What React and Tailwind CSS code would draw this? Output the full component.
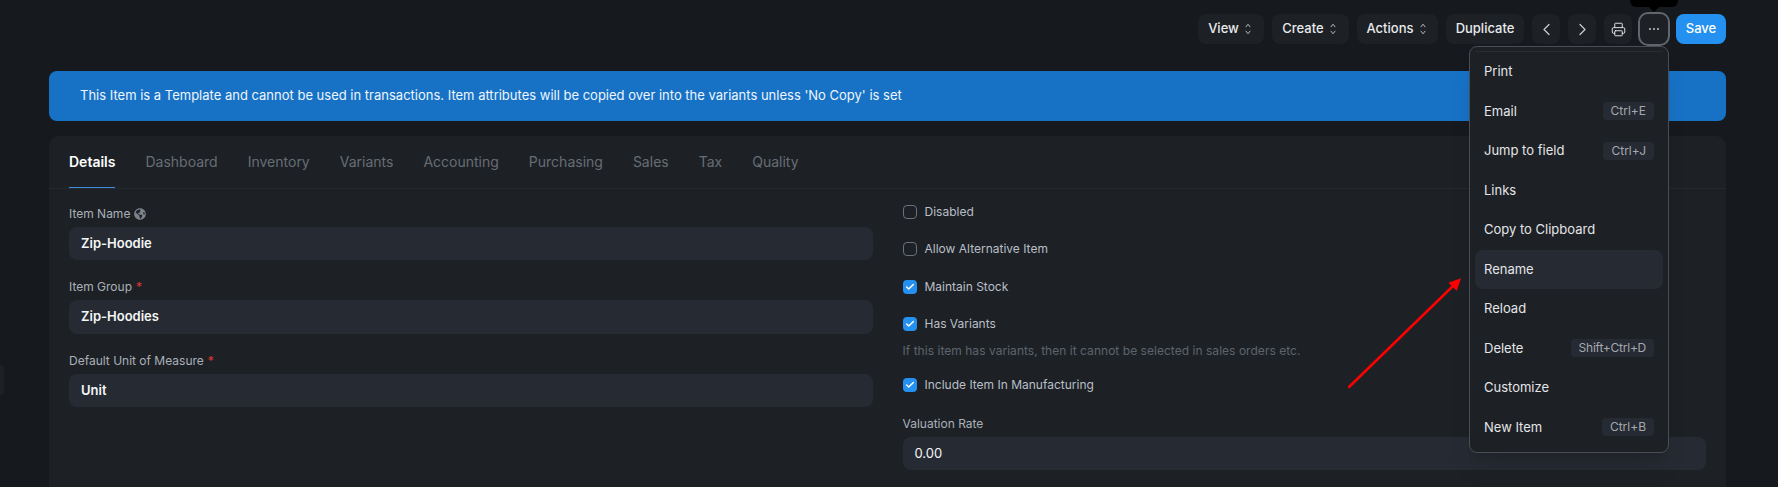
import React from 'react';
import { Check, Printer } from 'lucide-react';
import { FaGlobeAmericas } from 'react-icons/fa';

const menuItems = [
  { label: 'Print' },
  { label: 'Email', keys: 'Ctrl+E' },
  { label: 'Jump to field', keys: 'Ctrl+J' },
  { label: 'Links' },
  { label: 'Copy to Clipboard' },
  { label: 'Rename', active: true },
  { label: 'Reload' },
  { label: 'Delete', keys: 'Shift+Ctrl+D', tight: true },
  { label: 'Customize' },
  { label: 'New Item', keys: 'Ctrl+B' }
];

const tabs = ['Dashboard', 'Inventory', 'Variants', 'Accounting', 'Purchasing', 'Sales', 'Tax', 'Quality'];

function UpDown() {
  return (
    <svg width="8" height="12" viewBox="0 0 8 12" fill="none" stroke="#b4b8be" strokeWidth="1" strokeLinecap="round" strokeLinejoin="round">
      <path d="M2 3.8 4 1.2 6 3.8" />
      <path d="M2 8.2 4 10.8 6 8.2" />
    </svg>
  );
}

function Chevron({ d }) {
  return (
    <svg width="9" height="13" viewBox="0 0 9 13" fill="none" stroke="#c4c8cd" strokeWidth="1.3" strokeLinecap="round" strokeLinejoin="round">
      <path d={d} />
    </svg>
  );
}

function ToolButton({ children, className = '' }) {
  return (
    <button className={`flex h-[30px] items-center justify-center rounded-lg bg-[#1d2125] text-[13px] font-[450] text-[#e8eaed] ${className}`}>
      {children}
    </button>
  );
}

function Field({ label, required, globe, value, height = 'h-[33px]', className = '' }) {
  return (
    <div className={className}>
      <div className="flex h-[19px] items-center gap-1 text-xs text-[#a9b0b8]">
        {label}
        {required && <span className="text-[#e03636]">*</span>}
        {globe && <FaGlobeAmericas size={12} className="text-[#7c8289]" />}
      </div>
      <div className={`mt-[4px] flex items-center rounded-lg bg-[#262a32] px-3 text-[13px] font-semibold text-[#f5f6f7] ${height}`}>
        {value}
      </div>
    </div>
  );
}

function CheckRow({ label, checked, className = '' }) {
  return (
    <div className={`flex h-[16px] items-center gap-2 text-xs text-[#b9bfc7] ${className}`}>
      {checked ? (
        <span className="flex size-[14px] items-center justify-center rounded-[4px] bg-[#2490ef]">
          <Check size={10} strokeWidth={3.5} className="text-white" />
        </span>
      ) : (
        <span className="size-[14px] rounded-[4px] border border-[#6b7178]" />
      )}
      {label}
    </div>
  );
}

export default function App() {
  return (
    <div className="relative h-[487px] overflow-hidden bg-[#16191e] font-['Inter',sans-serif]">
      {/* sidebar leftover on the left edge */}
      <div className="absolute left-0 top-[365px] h-[30px] w-[4px] rounded-r-md bg-[#1d2125]" />

      <div className="flex justify-end gap-2 pl-[49px] pr-[52px] pt-[14px]">
        <ToolButton className="w-[66px] gap-[5px] pr-[2px]">View <UpDown /></ToolButton>
        <ToolButton className="w-[77px] gap-[5px] pr-[2px]">Create <UpDown /></ToolButton>
        <ToolButton className="w-[81px] gap-[5px] pr-[2px]">Actions <UpDown /></ToolButton>
        <ToolButton className="w-[78px]">Duplicate</ToolButton>
        <ToolButton className="w-[28px]"><Chevron d="M7 1.5 2 6.5 7 11.5" /></ToolButton>
        <ToolButton className="w-[28px]"><Chevron d="M2 1.5 7 6.5 2 11.5" /></ToolButton>
        <ToolButton className="w-[28px]"><Printer size={15} strokeWidth={1.5} /></ToolButton>
        <ToolButton className="w-[28px] outline-2 outline-[#62666c]">
          <svg width="12" height="4" viewBox="0 0 12 4" fill="#d4d7db">
            <circle cx="2" cy="2" r="0.9" />
            <circle cx="6" cy="2" r="0.9" />
            <circle cx="10" cy="2" r="0.9" />
          </svg>
        </ToolButton>
        <ToolButton className="w-[50px] bg-[#2490ef] text-white">Save</ToolButton>
      </div>

      <div className="mt-[27px] pl-[49px] pr-[52px]">
        <div className="flex h-[50px] items-center rounded-lg bg-[#1772c6] pl-[31px] text-[13px] text-[#eef5fc]">
          This Item is a Template and cannot be used in transactions. Item attributes will be copied over into the variants unless 'No Copy' is set
        </div>

        <div className="mt-[15px] rounded-t-[10px] bg-[#1d2125] pb-[40px]">
          <div className="flex h-[53px] gap-[30px] border-b border-[#25292e] px-5 text-sm text-[#676d75]">
            <div className="flex h-[52px] items-center border-b border-[#3b8fdc] font-semibold text-white">Details</div>
            {tabs.map(tab => (
              <div key={tab} className="flex h-[52px] items-center">{tab}</div>
            ))}
          </div>

          <div className="grid grid-cols-2 gap-[30px] px-5 pt-[15px]">
            <div>
              <Field label="Item Name" globe value="Zip-Hoodie" />
              <Field label="Item Group" required value="Zip-Hoodies" height="h-[34px]" className="mt-[17px]" />
              <Field label="Default Unit of Measure" required value="Unit" className="mt-[17px]" />
            </div>
            <div>
              <CheckRow label="Disabled" />
              <CheckRow label="Allow Alternative Item" className="mt-[21px]" />
              <CheckRow label="Maintain Stock" checked className="mt-[22px]" />
              <CheckRow label="Has Variants" checked className="mt-[21px]" />
              <p className="mt-[11px] h-[16px] text-xs leading-4 tracking-[0.003em] text-[#5d646c]">
                If this item has variants, then it cannot be selected in sales orders etc.
              </p>
              <CheckRow label="Include Item In Manufacturing" checked className="mt-[18px]" />
              <Field label="Valuation Rate" value="0.00" className="mt-[21px] [&>div:last-child]:font-normal" />
            </div>
          </div>
        </div>
      </div>

      {/* tooltip of the focused button */}
      <div className="absolute left-[1630px] top-0 h-[7px] w-[48px] rounded-b-md bg-black" />
      <div className="absolute left-[1649px] top-[7px] size-0 border-x-[5px] border-t-[5px] border-x-transparent border-t-black" />

      {/* menu */}
      <div className="absolute left-[1469px] top-[46px] w-[200px] rounded-lg border border-[#4a4e54] bg-[#1d2125] px-[5px] pb-[5px] pt-[4px] shadow-xl">
        <div className="border-t border-[#2a2e33]" />
        {menuItems.map(item => (
          <div
            key={item.label}
            className={`flex h-[39.5px] items-center justify-between rounded-lg px-[9px] text-[13px] text-[#e3e5e8] ${item.active ? 'bg-[#262a32]' : ''}`}
          >
            {item.label}
            {item.keys && (
              <span className={`flex h-[18px] items-center rounded bg-[#262a32] px-2 text-xs text-[#a4a9b0] ${item.tight ? 'tracking-[-0.02em]' : ''}`}>{item.keys}</span>
            )}
          </div>
        ))}
      </div>

      {/* annotation arrow */}
      <svg className="absolute left-[1340px] top-[270px]" width="130" height="125" viewBox="0 0 130 125" fill="none">
        <path d="M9 117 112 17" stroke="#ff0000" strokeWidth="2.5" strokeLinecap="round" />
        <path d="M121 8.3 108.3 12.7 116.7 20.7Z" fill="#ff0000" />
      </svg>
    </div>
  );
}
